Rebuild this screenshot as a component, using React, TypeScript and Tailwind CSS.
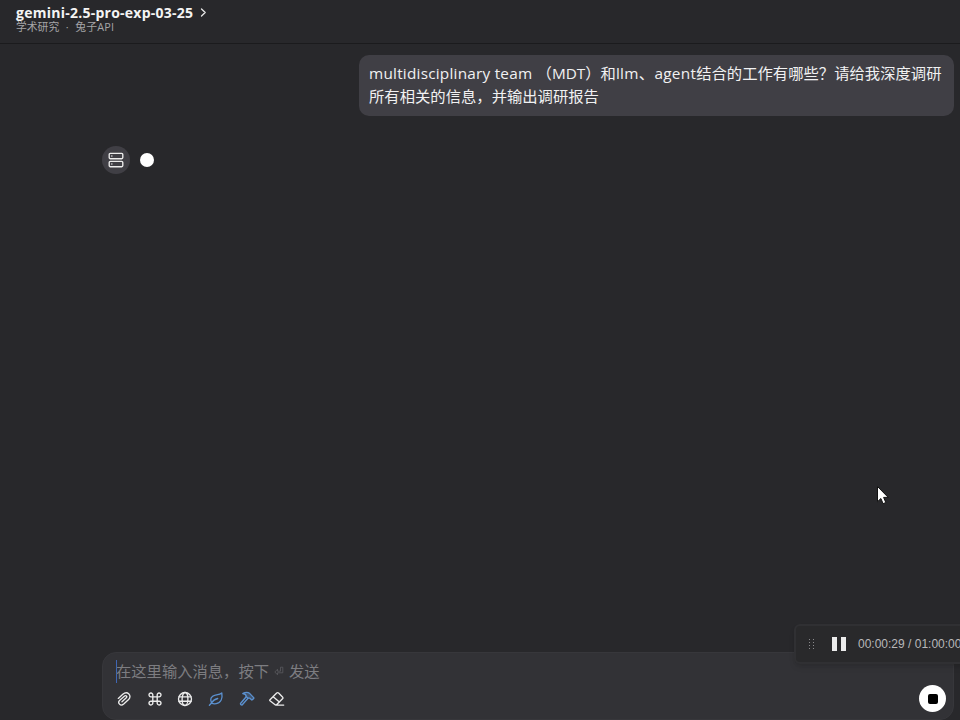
import type { ReactNode } from "react"

type IconProps = { className?: string; children: ReactNode }

const Icon = ({ className = "text-[#ececec]", children }: IconProps) => (
	<svg
		className={`size-4 shrink-0 ${className}`}
		viewBox="0 0 16 16"
		fill="none"
		stroke="currentColor"
		strokeWidth="1.35"
		strokeLinecap="round"
		strokeLinejoin="round">
		{children}
	</svg>
)

const Header = () => {
	return (
		<header className="h-11 shrink-0 border-b border-[#1b1b1d] px-4 pt-1">
			<div className="flex h-[17px] items-center">
				<h1 className="whitespace-nowrap text-[14px] font-bold leading-[17px] tracking-[0.25px] text-[#f4f4f4]">
					gemini-2.5-pro-exp-03-25
				</h1>
				<svg
					className="ml-[6px] h-3 w-2"
					viewBox="0 0 8 12"
					fill="none"
					stroke="#e8e8e8"
					strokeWidth="1.3"
					strokeLinecap="round"
					strokeLinejoin="round">
					<path d="M2.5 2 6.2 5.5 2.5 9" />
				</svg>
			</div>
			<p className="flex text-[10.8px] leading-3 text-[#a5a5a7]">
				<span>学术研究</span>
				<span className="w-4 text-center">·</span>
				<span className="tracking-[0.2px]">兔子API</span>
			</p>
		</header>
	)
}

const Messages = () => {
	return (
		<main className="flex-1 pl-[102px] pr-[6px] pt-[11px]">
			{/* User message */}
			<div className="ml-auto h-[61px] w-[595px] whitespace-nowrap rounded-[10px] bg-[#403f45] px-[10px] pt-[7px] text-[15.33px] leading-[23px] text-[#f1f1f2]">
				<p>
					<span className="tracking-[0.23px]">multidisciplinary team </span>
					<span>（MDT）和</span>
					<span className="tracking-[0.3px]">llm、agent</span>
					<span>结合的工作有哪些？请给我深度调研</span>
				</p>
				<p>所有相关的信息，并输出调研报告</p>
			</div>

			{/* Pending answer */}
			<div className="mt-[30px] flex items-center gap-[10px]">
				<div className="flex size-7 items-center justify-center rounded-full bg-[#403f45]">
					<Icon>
						<rect x="1.2" y="1.3" width="13.6" height="5.4" rx="1.1" />
						<rect x="1.2" y="9.3" width="13.6" height="5.4" rx="1.1" />
						<path d="M3.8 4h.1M3.8 12h.1" />
					</Icon>
				</div>
				<span className="size-[14px] rounded-full bg-white" />
			</div>
		</main>
	)
}

const Toolbar = () => (
	<div className="flex items-center gap-[14.7px]">
		<Icon>
			<path d="m2.3 7.4 4.5-4.1c2-1.8 4.6-1.8 6.1-.4 1.5 1.5 1.4 4-.3 5.6l-4.9 4.6c-1.3 1.1-3.2 1.1-4.2 0-1-1.1-.9-2.8.3-3.9L8.6 5c.6-.5 1.3-.5 1.8 0s.4 1.2-.1 1.7L6 10.7" />
		</Icon>
		<Icon>
			<path d="M5.8 5.8V4a1.9 1.9 0 1 0-1.9 1.8h8.2A1.9 1.9 0 1 0 10.2 4v8a1.9 1.9 0 1 0 1.9-1.8H3.9A1.9 1.9 0 1 0 5.8 12Z" />
		</Icon>
		<Icon>
			<circle cx="8" cy="8" r="6.5" />
			<ellipse cx="8" cy="8" rx="2.9" ry="6.5" />
			<path d="M1.9 5.8h12.2M1.9 10.2h12.2" />
		</Icon>
		<Icon className="text-[#5b91d0]">
			<path d="M1.4 14.2 3.5 12M3.5 12C1.6 8.6 3.1 4.9 7.2 4.1 9.8 3.6 12 3.5 13.8 2c.9 5.2-.8 9.8-5.6 10.7-1.8.3-3.6 0-4.7-.7ZM3.5 12c1-1.8 3-3.7 6.2-4.5" />
		</Icon>
		<Icon className="text-[#5b91d0]">
			<path
				d="M3.8 2.5C6.6.9 9 1 10.8 2.6l3.9 4c.2.3.2.6 0 .8l-1.4 1.4c-.3.2-.6.2-.8 0l-1.9-1.7-1.7.1-1.7-1.7C7.3 4.1 6 3 3.8 2.5Z"
				fill="currentColor"
				fillOpacity=".35"
			/>
			<path d="m7.2 5.7-5.5 6.5c-.4.5-.3.9 0 1.2l.4.4c.4.3.8.3 1.2-.1L9 7.3" />
		</Icon>
		<Icon>
			<path d="m1 8.8 6.7-6.7c.6-.6 1.3-.6 1.9 0l3.9 3.9c.6.6.6 1.2 0 1.8L7.8 13.5c-.6.6-1.4.6-2 0L1 9.8c-.3-.3-.3-.7 0-1ZM4.2 5.8l6.2 5.2M7.2 14.1h7.5" />
		</Icon>
	</div>
)

const Composer = () => {
	return (
		<div className="ml-[102px] mr-[6px] flex h-[68px] shrink-0 flex-col rounded-[14px] border border-[#37373b] bg-[#323236] pl-[13px] pr-[7px] pt-[6px]">
			<div className="flex h-6 items-center whitespace-nowrap text-[15.3px] text-[#7d7d81]">
				<span className="-mr-px h-[23px] w-px bg-[#3f66b5]" />
				<span>在这里输入消息，按下</span>
				<svg
					className="mx-[5px] size-[10px]"
					viewBox="0 0 10 10"
					fill="none"
					stroke="#5b5b5f"
					strokeWidth=".8">
					<path d="M6.5 1.2h2.3v5.6H3.5v2L.8 6l2.7-2.8v2h3Z" />
				</svg>
				<span>发送</span>
			</div>
			<div className="flex h-[31px] items-center justify-between">
				<Toolbar />
				<button className="flex size-[27px] items-center justify-center rounded-full bg-white">
					<span className="size-[10px] rounded-[2px] bg-black" />
				</button>
			</div>
		</div>
	)
}

const Recorder = () => {
	return (
		<div className="absolute left-[794px] top-[624px] flex h-[40px] w-[176px] items-center rounded-md border-2 border-[#303033] bg-[#29292b] shadow-md">
			<div className="ml-[13px] grid grid-cols-2 gap-x-[3px] gap-y-[2px]">
				{Array.from({ length: 8 }, (_, i) => (
					<i key={i} className="size-px bg-[#8a8a8d]" />
				))}
			</div>
			<div className="ml-[18px] flex gap-1">
				<i className="h-[14px] w-[5px] bg-[#ececec]" />
				<i className="h-[14px] w-[5px] bg-[#ececec]" />
			</div>
			<span className="ml-3 whitespace-nowrap font-['Liberation_Sans',sans-serif] text-[12px] text-[#b8b8ba]">
				00:00:29 / 01:00:00
			</span>
		</div>
	)
}

const App = () => {
	return (
		<div className="relative flex h-[720px] w-[960px] flex-col overflow-hidden bg-[#28282b] font-['Open_Sans','Noto_Sans_CJK_SC',sans-serif]">
			<Header />
			<Messages />
			<Composer />
			<Recorder />

			{/* Mouse pointer */}
			<svg
				className="absolute left-[876px] top-[485px] h-[21px] w-[14px]"
				viewBox="0 0 14 21"
				fill="#fff"
				stroke="#111"
				strokeWidth="1">
				<path d="M1.5 1.5v15.2l3.4-3.2 2.2 5.2 2.7-1.2-2.2-5.1h4.6Z" />
			</svg>
		</div>
	)
}

export default App
